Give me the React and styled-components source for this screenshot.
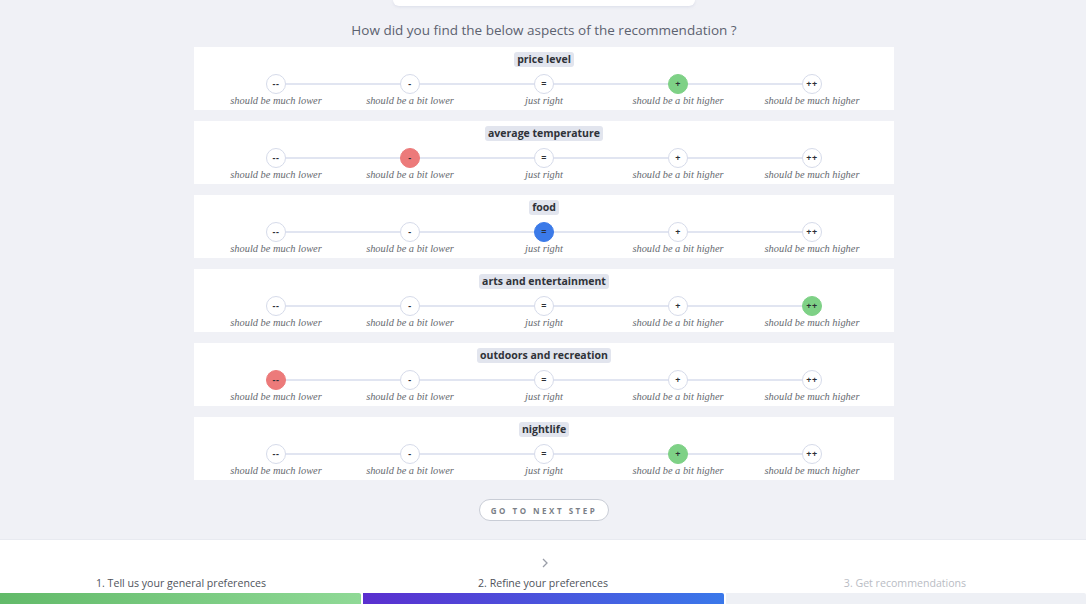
import styled, { createGlobalStyle } from "styled-components";

const GlobalStyle = createGlobalStyle`
  html, body {
    margin: 0;
    padding: 0;
    background: #f0f1f6;
    font-family: "Open Sans", "Liberation Sans", sans-serif;
  }
`;

const OPTIONS = [
  { sign: "--", label: "should be much lower" },
  { sign: "-", label: "should be a bit lower" },
  { sign: "=", label: "just right" },
  { sign: "+", label: "should be a bit higher" },
  { sign: "++", label: "should be much higher" },
];

const ASPECTS = [
  { name: "price level", value: 3, tone: "green" },
  { name: "average temperature", value: 1, tone: "red" },
  { name: "food", value: 2, tone: "blue" },
  { name: "arts and entertainment", value: 4, tone: "green" },
  { name: "outdoors and recreation", value: 0, tone: "red" },
  { name: "nightlife", value: 3, tone: "green" },
];

const TONES = {
  green: "#7ed186",
  red: "#ec7a7a",
  blue: "#3b7ae8",
};

export default function App() {
  return (
    <>
      <GlobalStyle />
      <Page>
        <Main>
          <TopTab />
          <Question>How did you find the below aspects of the recommendation ?</Question>
          <CardList>
            {ASPECTS.map((aspect) => (
              <Card key={aspect.name}>
                <Pill>{aspect.name}</Pill>
                <Scale>
                  <Track />
                  {OPTIONS.map((opt, i) => (
                    <Option key={opt.sign}>
                      <Dot $color={i === aspect.value ? TONES[aspect.tone] : null}>
                        {opt.sign}
                      </Dot>
                      <OptionLabel>{opt.label}</OptionLabel>
                    </Option>
                  ))}
                </Scale>
              </Card>
            ))}
          </CardList>
          <NextButton>GO TO NEXT STEP</NextButton>
        </Main>
        <Footer>
          <Chevron>
            <svg width="8" height="10" viewBox="0 0 8 10">
              <path d="M2 1 L6 5 L2 9" fill="none" stroke="#9a9ea8" strokeWidth="1.3" />
            </svg>
          </Chevron>
          <Steps>
            <Step>1. Tell us your general preferences</Step>
            <Step>2. Refine your preferences</Step>
            <Step $muted>3. Get recommendations</Step>
          </Steps>
          <Bars>
            <Bar $bg="linear-gradient(90deg, #62ba69, #8fd996)" />
            <Bar $bg="linear-gradient(90deg, #5a2fcf, #3a78ea)" />
            <Bar $bg="#eef0f5" />
          </Bars>
        </Footer>
      </Page>
    </>
  );
}

const Page = styled.div`
  width: 1086px;
  height: 604px;
  overflow: hidden;
  display: flex;
  flex-direction: column;
`;

const Main = styled.div`
  height: 539px;
  display: flex;
  flex-direction: column;
  align-items: center;
  background: #f0f1f6;
`;

const TopTab = styled.div`
  width: 302px;
  height: 6px;
  margin-left: 2px;
  background: #ffffff;
  border-radius: 0 0 8px 8px;
  box-shadow: 0 1px 3px rgba(180, 185, 210, 0.35);
`;

const Question = styled.div`
  margin-top: 15px;
  margin-left: 2px;
  height: 18px;
  line-height: 18px;
  font-size: 13.5px;
  font-weight: 500;
  color: #5c6270;
`;

const CardList = styled.div`
  margin-top: 8px;
  margin-left: 2px;
  display: flex;
  flex-direction: column;
  gap: 11px;
`;

const Card = styled.div`
  width: 700px;
  height: 63px;
  box-sizing: border-box;
  padding: 5px 15px 0;
  background: #ffffff;
  display: flex;
  flex-direction: column;
  align-items: center;
`;

const Pill = styled.div`
  height: 15px;
  line-height: 15px;
  padding: 0 3px;
  border-radius: 3px;
  background: #e2e5ee;
  color: #2f3238;
  font-size: 10.5px;
  font-weight: 700;
`;

const Scale = styled.div`
  position: relative;
  margin-top: 7px;
  width: 100%;
  display: grid;
  grid-template-columns: repeat(5, 1fr);
`;

const Track = styled.div`
  position: absolute;
  left: 10%;
  right: 10%;
  top: 9px;
  height: 2px;
  background: #e1e5f1;
`;

const Option = styled.div`
  position: relative;
  display: flex;
  flex-direction: column;
  align-items: center;
`;

const Dot = styled.div`
  width: 20px;
  height: 20px;
  box-sizing: border-box;
  border-radius: 50%;
  border: 1px solid ${(p) => (p.$color ? p.$color : "#d6dbea")};
  background: ${(p) => (p.$color ? p.$color : "#ffffff")};
  color: #2c2f35;
  font-size: 9px;
  font-weight: 700;
  letter-spacing: 0.5px;
  line-height: 18px;
  text-align: center;
`;

const OptionLabel = styled.div`
  height: 12px;
  line-height: 12px;
  margin-top: 1px;
  font-family: "Liberation Serif", serif;
  font-style: italic;
  font-size: 10.4px;
  color: #666a70;
  white-space: nowrap;
`;

const NextButton = styled.div`
  margin-top: 19px;
  margin-left: 2px;
  width: 130px;
  height: 22px;
  box-sizing: border-box;
  border: 1px solid #c9cdd6;
  border-radius: 11px;
  background: #ffffff;
  display: flex;
  align-items: center;
  justify-content: center;
  font-size: 8px;
  font-weight: 700;
  letter-spacing: 2.5px;
  color: #7b7f87;
`;

const Footer = styled.div`
  flex: 1;
  background: #ffffff;
  border-top: 1px solid #e8eaf0;
  display: flex;
  flex-direction: column;
`;

const Chevron = styled.div`
  margin-top: 18px;
  height: 12px;
  display: flex;
  justify-content: center;
  padding-left: 4px;
`;

const Steps = styled.div`
  margin-top: 6px;
  display: grid;
  grid-template-columns: repeat(3, 1fr);
`;

const Step = styled.div`
  text-align: center;
  font-size: 10.6px;
  line-height: 14px;
  color: ${(p) => (p.$muted ? "#b9bcc4" : "#4f535b")};
`;

const Bars = styled.div`
  margin-top: 3px;
  display: grid;
  grid-template-columns: 361px 361px 1fr;
  gap: 2px;
`;

const Bar = styled.div`
  height: 11px;
  border-radius: 0 2px 0 0;
  background: ${(p) => p.$bg};
`;
